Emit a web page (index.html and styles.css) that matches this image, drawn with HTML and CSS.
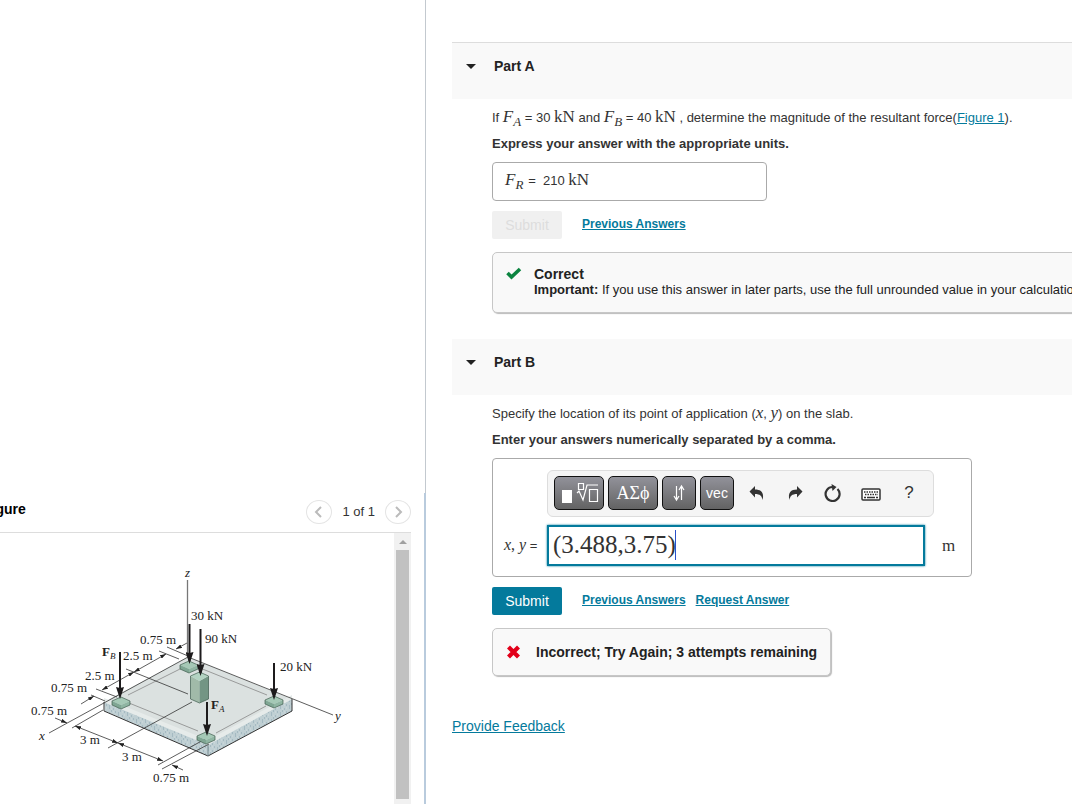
FILE: index.html
```html
<!DOCTYPE html>
<html lang="en">
<head>
<meta charset="utf-8">
<title>Resultant force on a slab</title>
<link rel="stylesheet" href="styles.css">
</head>
<body>
<div class="layout">
  <aside class="side">
    <section class="viewer">
      <header class="viewer-head">
        <h2 class="viewer-title">Figure</h2>
        <nav class="pager">
          <button class="round" aria-label="Previous figure"><svg width="10" height="12" viewBox="0 0 10 12"><path d="M7 1L2 6l5 5"/></svg></button>
          <span>1 of 1</span>
          <button class="round" aria-label="Next figure"><svg width="10" height="12" viewBox="0 0 10 12"><path d="M3 1l5 5-5 5"/></svg></button>
        </nav>
      </header>
      <div class="viewer-body">
        <svg class="figure" viewBox="0 533 394 271" role="img" aria-label="Loaded slab">
          <defs>
            <marker id="big" markerUnits="userSpaceOnUse" markerWidth="12" markerHeight="8" refX="9" refY="4" orient="auto"><path d="M0 0L12 4L0 8L1 4z" fill="#1d1b1c"/></marker>
            <marker id="dim" markerUnits="userSpaceOnUse" markerWidth="8" markerHeight="4" refX="6" refY="2" orient="auto-start-reverse"><path d="M0 0L6 2L0 4z" fill="#222"/></marker>
            <pattern id="grain" width="9" height="7" patternUnits="userSpaceOnUse">
              <rect width="9" height="7" fill="#bfcfd3"/>
              <path d="M1 1h1M5 2h1M3 4h1M7 5h1M1 6h1" stroke="#8ba5b1"/>
              <path d="M3 2h1M7 1h1M5 5h1" stroke="#d3dee0"/>
            </pattern>
            <g id="pad">
              <path d="M-9 0L0-4L9 0L0 4z" fill="#a5c9b6"/>
              <path d="M-9 0L0 4v4l-9-4z" fill="#7fa693"/>
              <path d="M9 0L0 4v4l9-4z" fill="#8fb5a2"/>
              <path d="M-9 0L0-4L9 0v4L0 8l-9-4z" fill="none" stroke="#3f5c4e" stroke-width=".7"/>
            </g>
          </defs>
          <path d="M104 702L188 657L292 699L208 745z" fill="#dbe1e0"/>
          <path d="M104 702L208 744v12L105 711z" fill="url(#grain)"/>
          <path d="M292 699L208 744v12l84-45z" fill="url(#grain)"/>
          <path d="M104 698L208 740L292 695v4l-84 46L104 702z" fill="#e6ebea"/>
          <path d="M104 702v9L208 756L292 711v-12" fill="none" stroke="#333" stroke-width="1"/>
          <path d="M208 745v11" stroke="#788b90"/>
          <g class="thin">
            <path d="M49 733L188 657L333 715"/>
            <path d="M128 695L182 668M200 668L267 695M129 703L198 731M216 733L266 706" class="pale"/>
            <path d="M167 647L188 656M159 651L179 659M126 669L188 694M96 689L117 697M91 695L105 701M72 728L103 710M108 748L192 702M158 765L207 738M162 769L209 744"/>
            <path d="M187 643L176 649" marker-end="url(#dim)"/>
            <path d="M166 654L134 672" marker-start="url(#dim)" marker-end="url(#dim)"/>
            <path d="M134 672L102 690" marker-start="url(#dim)" marker-end="url(#dim)"/>
            <path d="M81 704L94 696" marker-end="url(#dim)"/>
            <path d="M55 718L67 723" marker-end="url(#dim)"/>
            <path d="M75 726L118 743" marker-start="url(#dim)" marker-end="url(#dim)"/>
            <path d="M118 743L163 761" marker-start="url(#dim)" marker-end="url(#dim)"/>
            <path d="M183 770L172 765" marker-end="url(#dim)"/>
          </g>
          <path d="M187.500 580v78" stroke="#777" stroke-width="1.300"/>
          <use href="#pad" x="189" y="665"/>
          <use href="#pad" x="121" y="701"/>
          <use href="#pad" x="274" y="700"/>
          <use href="#pad" x="206" y="736"/>
          <path d="M190.500 676v23l9 4v-22z" fill="#a1baa9"/>
          <path d="M199.500 681l9-5v23l-9 4z" fill="#739584"/>
          <path d="M190.500 676l9-4 9 4-9 5z" fill="#b3d3c2"/>
          <path d="M190.500 676l9-4 9 4v23l-9 4-9-4z" fill="none" stroke="#3f5c4e" stroke-width=".7"/>
          <g class="force">
            <path d="M189.500 624v37"/><path d="M200.500 629v44"/><path d="M120 652v44"/><path d="M274 663v34"/><path d="M207 702v31"/>
          </g>
          <g class="labels">
            <text x="185" y="577" class="it">z</text><text x="39" y="740" class="it">x</text><text x="335" y="720" class="it">y</text>
            <text x="191" y="620">30 kN</text><text x="205" y="643">90 kN</text><text x="280" y="671">20 kN</text>
            <text x="140" y="644">0.75 m</text><text x="123" y="660">2.5 m</text><text x="85" y="680">2.5 m</text>
            <text x="51" y="692">0.75 m</text><text x="31" y="715">0.75 m</text>
            <text x="80" y="744">3 m</text><text x="122" y="761">3 m</text><text x="153" y="782">0.75 m</text>
            <text x="102" y="656" class="b">F<tspan class="sub" dy="3">B</tspan></text>
            <text x="211" y="709" class="b">F<tspan class="sub" dy="3">A</tspan></text>
          </g>
        </svg>
        <div class="scroll" aria-hidden="true"><svg width="8" height="4" viewBox="0 0 8 4"><path d="M0 4L4 0l4 4z" fill="#a0a0a0"/></svg><div class="thumb"></div></div>
      </div>
    </section>
  </aside>

  <main class="main">
    <section class="part">
      <h2 class="part-head first"><button class="toggle"><span class="tri"></span>Part A</button></h2>
      <div class="part-body">
        <p>If <span class="math"><i>F<sub>A</sub></i></span> = 30 <span class="math">kN</span> and <span class="math"><i>F<sub>B</sub></i></span> = 40 <span class="math">kN</span> , determine the magnitude of the resultant force(<a href="#figure">Figure 1</a>).</p>
        <p class="strong">Express your answer with the appropriate units.</p>
        <div class="given"><span class="math"><i>F<sub>R</sub></i></span> <span>=</span> <span class="value">210 <span class="math">kN</span></span></div>
        <div class="actions"><button class="submit" disabled>Submit</button><a href="#previous">Previous Answers</a></div>
        <div class="notice wide">
          <svg class="mark" width="16" height="14" viewBox="0 0 16 14"><path d="M1.500 7L5.500 11l8.500-8" fill="none" stroke="#0b8440" stroke-width="3.600"/></svg>
          <div><div class="notice-title">Correct</div><div class="notice-text"><b>Important:</b> If you use this answer in later parts, use the full unrounded value in your calculations.</div></div>
        </div>
      </div>
    </section>

    <section class="part">
      <h2 class="part-head"><button class="toggle"><span class="tri"></span>Part B</button></h2>
      <div class="part-body">
        <p>Specify the location of its point of application (<span class="math var">x</span>, <span class="math var">y</span>) on the slab.</p>
        <p class="strong">Enter your answers numerically separated by a comma.</p>
        <div class="entry">
          <div class="tools">
            <button class="key" aria-label="Templates"><svg width="40" height="24" viewBox="0 0 40 24"><path d="M3 9h10v13H3z" fill="#fff"/><path d="M18 12l2-2 4 9 4-15h11M30.500 8.500h8v12h-8zM19.500 2.500h5v6h-5z" fill="none" stroke="#fff" stroke-width="1.200"/></svg></button>
            <button class="key greek">ΑΣϕ</button>
            <button class="key small" aria-label="Arrows"><svg width="14" height="18" viewBox="0 0 14 18"><path d="M4.500 2v13M2 12l2.500 4L7 12M9.500 16V3M7 6l2.500-4L12 6" fill="none" stroke="#fff" stroke-width="1.200"/></svg></button>
            <button class="key small">vec</button>
            <div class="plain-tools">
              <button class="tool" aria-label="Undo"><svg width="16" height="16" viewBox="0 0 16 16"><path d="M6 1v3.500c6 0 9.500 3 7.500 10.500C13 11 11 9 6 9v3.500L.500 6.500z"/></svg></button>
              <button class="tool" aria-label="Redo"><svg width="16" height="16" viewBox="0 0 16 16"><path d="M10 1v3.500C4 4.500.500 7.500 2.500 15 3 11 5 9 10 9v3.500l5.500-6z"/></svg></button>
              <button class="tool" aria-label="Reset"><svg width="18" height="18" viewBox="0 0 18 18"><path d="M13.500 5A7 7 0 1 1 8.500 3" fill="none" stroke="#333" stroke-width="2.200"/><path d="M7.500 0l5 3-4 4z"/></svg></button>
              <button class="tool" aria-label="Keyboard"><svg class="board" width="20" height="13" viewBox="0 0 20 13"><rect x="1" y="1" width="18" height="11" rx="1" fill="#fff" stroke="#333" stroke-width="1.500"/><path d="M3 4h14M4 6.500h13" fill="none" stroke="#333" stroke-width="1.500" stroke-dasharray="1.500 1"/><path d="M3 9.500h2M6 9.500h8M15 9.500h2" stroke="#333" stroke-width="1.500"/></svg></button>
              <button class="tool help" aria-label="Help">?</button>
            </div>
          </div>
          <label class="entry-label" for="xy"><span class="math var">x</span><span class="math">, </span><span class="math var">y</span> =</label>
          <div class="field"><input id="xy" type="text" value="(3.488,3.75)" autocomplete="off"><span class="caret"></span></div>
          <span class="unit math">m</span>
        </div>
        <div class="actions"><button class="submit">Submit</button><a href="#previous">Previous Answers</a><a class="request" href="#request">Request Answer</a></div>
        <div class="notice single">
          <svg class="mark" width="16" height="16" viewBox="0 0 16 16"><path d="M2.500 3l10 10M12.500 3l-10 10" stroke="#e2001a" stroke-width="4.200"/></svg>
          <div class="notice-title">Incorrect; Try Again; 3 attempts remaining</div>
        </div>
      </div>
    </section>
    <a class="feedback" href="#feedback">Provide Feedback</a>
  </main>
</div>
</body>
</html>
```
FILE: styles.css
```css
* { box-sizing: border-box; }
body {
  margin: 0;
  overflow: hidden;
  background: #fff;
  color: #333;
  font: 13px/26px "Liberation Sans", Arial, sans-serif;
}
h2, p { margin: 0; font-size: inherit; font-weight: inherit; }
button { margin: 0; padding: 0; border: 0; background: none; color: inherit; font: inherit; }
a { color: #047a9c; }
svg { display: block; }
.layout { display: grid; grid-template-columns: 426px minmax(0, 1fr); min-height: 100vh; }

/* figure pane */
.side { display: flex; flex-direction: column; justify-content: flex-end; overflow: hidden; background: linear-gradient(#c3c9cf, #c3c9cf) right / 1px 100% no-repeat; }
.viewer { padding-right: 13px; border-right: 2px solid #b9cbdd; }
.viewer-head { display: flex; align-items: center; justify-content: space-between; height: 40px; border-bottom: 1px solid #ddd; }
.viewer-title { margin: 0 0 7px -17px; color: #000; font-size: 14px; font-weight: bold; line-height: 20px; }
.pager { display: flex; align-items: center; gap: 10px; margin-bottom: 2px; font-size: 13px; color: #333; }
.round { display: flex; align-items: center; justify-content: center; width: 26px; height: 24px; border: 1px solid #e4e4e4; border-radius: 50%; }
.round path { fill: none; stroke: #bbb; stroke-width: 2; }
.viewer-body { display: flex; }
.figure { flex: 1; min-width: 0; }
.scroll { display: flex; flex-direction: column; align-items: center; gap: 6px; width: 17px; padding: 7px 0 5px; background: #f1f1f1; }
.thumb { flex: 1; width: 13px; background: #c1c1c1; }
.thin path { fill: none; stroke: #333; stroke-width: .8; }
.thin .pale { stroke: #888; }
.force path { stroke: #1d1b1c; stroke-width: 2; marker-end: url(#big); }
.force marker path { stroke: none; }
.labels { font: 13px "Liberation Serif", "Times New Roman", serif; fill: #222; }
.labels .it, .labels .sub { font-style: italic; }
.labels .b { font-weight: bold; }
.labels .sub { font-size: 9px; font-weight: normal; }

/* question parts */
.main { overflow: hidden; padding: 42px 0 40px 26px; }
.part { margin-bottom: 26px; }
.part-head { padding: 14px 19px 24px 14px; background: #f9f9f9; line-height: 18px; }
.part-head.first { border-top: 1px solid #ddd; }
.toggle { display: flex; align-items: center; gap: 18px; color: #222; font-size: 14px; font-weight: bold; line-height: 18px; }
.tri { border: 5px solid transparent; border-top: 5px solid #222; border-bottom: 0; }
.part-body { padding: 6px 0 0 40px; }
.part-body p { height: 26px; white-space: nowrap; }
.strong { font-weight: bold; }
.math { font-family: "Liberation Serif", "Times New Roman", serif; font-size: 17px; line-height: 20px; }
.math sub { font-size: 13px; line-height: 1px; }
.var { font-style: italic; font-size: 17px; }
.given { display: flex; gap: 5px; align-items: baseline; width: 275px; margin-top: 5px; padding: 5px 12px 6px; border: 1px solid #aaa; border-radius: 4px; }
.value { margin-left: 2px; }
.actions { display: flex; align-items: center; margin: 10px 0 13px; font-size: 12px; font-weight: bold; line-height: 28px; }
.actions a { line-height: 24px; margin-bottom: 2px; }
.submit { width: 70px; margin-right: 20px; border-radius: 2px; background: #047a9c; color: #fff; font-size: 14px; font-weight: normal; }
.submit:disabled { background: #f0f0f0; color: #ddd; }
.actions .request { margin-left: 10px; }
.notice { display: flex; border: 1px solid #c7c7c7; border-radius: 5px; background: #f9f9f9; box-shadow: 1px 1px 1px #bbb; white-space: nowrap; color: #222; }
.wide { width: max-content; padding: 13px; line-height: 16px; }
.wide > div { padding-bottom: 1px; }
.mark { flex: none; margin-right: 12px; }
.notice-title { font-size: 14px; font-weight: bold; }
.single { width: 339px; align-items: center; padding: 10px 13px; }
.single .mark { margin-right: 14px; }
.entry { display: grid; grid-template-columns: 54px 378px 1fr; row-gap: 8px; align-items: center; width: 480px; margin-top: 5px; padding: 11px 0 10px; border: 1px solid #aaa; border-radius: 4px; }
.tools { grid-column: 2 / 4; display: flex; align-items: center; gap: 4px; width: 387px; height: 47px; padding: 0 0 2px 6px; border: 1px solid #ddd; border-radius: 6px; background: #f5f5f5; }
.key { display: flex; flex: none; align-items: center; justify-content: center; width: 50px; height: 34px; border: 1px solid #111; border-radius: 5px; background: linear-gradient(#92929a, #636363); color: #fff; font-size: 14px; }
.key.small { width: 34px; }
.greek { font-family: "Liberation Serif", "Times New Roman", serif; font-size: 18px; }
.plain-tools { display: flex; }
.tool { display: flex; flex: none; align-items: center; justify-content: center; width: 38px; height: 34px; fill: #333; }
.board { margin-top: 4px; }
.help { font-size: 17px; }
.entry-label { padding-left: 11px; white-space: nowrap; }
.entry-label .math { font-size: 16px; }
.field { position: relative; }
.field input { display: block; width: 100%; height: 41px; padding: 0 4px 2px; border: 2px solid #047a9c; border-radius: 0; outline: 0; box-shadow: 0 0 2px #047a9c; color: #333; font: 25px "Liberation Serif", "Times New Roman", serif; }
.caret { position: absolute; top: 5px; left: 128px; width: 1px; height: 30px; background: #2a50c8; }
.unit { padding-left: 17px; font-size: 17px; }
.feedback { display: inline-block; margin-top: 11px; font-size: 14px; }
```
